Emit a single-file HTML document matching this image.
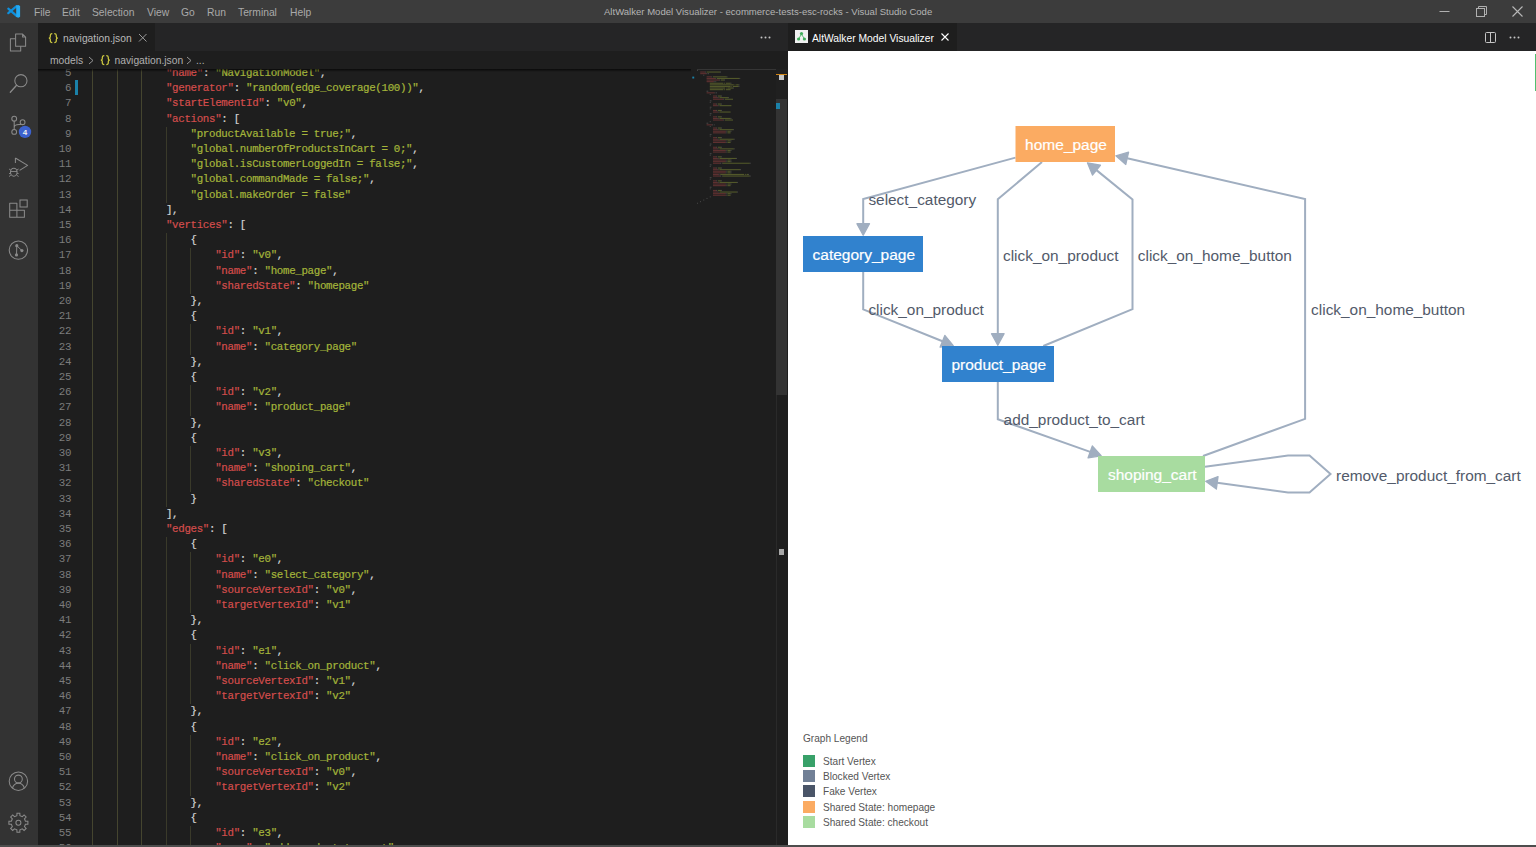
<!DOCTYPE html>
<html><head><meta charset="utf-8">
<style>
*{margin:0;padding:0;box-sizing:border-box}
html,body{width:1536px;height:847px;overflow:hidden;background:#1e1e1e;font-family:"Liberation Sans",sans-serif}
.a{position:absolute}
#title{left:0;top:0;width:1536px;height:23px;background:#3c3c3c}
.menu{position:absolute;top:5.5px;font-size:10.3px;color:#aaaaaa;line-height:13px;white-space:nowrap}
#wtitle{position:absolute;top:5.5px;left:604px;font-size:9.55px;color:#b4b4b4;line-height:12px;white-space:nowrap}
#act{left:0;top:23px;width:38px;height:822px;background:#333333}
#tabs1{left:38px;top:23px;width:750px;height:28px;background:#252526}
#tab1{left:38px;top:23px;width:117px;height:28px;background:#1e1e1e}
#tabs2{left:788px;top:23px;width:748px;height:28px;background:#252526}
#tab2{left:788px;top:23px;width:169px;height:28px;background:#1e1e1e}
.tt{position:absolute;font-size:10.3px;line-height:13px;white-space:nowrap}
#bc{left:38px;top:51px;width:750px;height:18px;background:#1e1e1e}
#edshadow{left:38px;top:69px;width:653px;height:3px;background:linear-gradient(#000000aa,#00000000)}
#webview{left:788px;top:51px;width:748px;height:794px;background:#ffffff}
#status{left:0;top:845px;width:1536px;height:2px;background:#4d4d4d}
.clip{position:absolute;left:38px;top:69px;width:659px;height:776px;overflow:hidden}
.inner{position:absolute;left:-38px;top:-69px;width:1536px;height:847px}
.ln{position:absolute;font-family:"Liberation Mono",monospace;font-size:10.8px;letter-spacing:-0.32px;-webkit-text-stroke:0.2px currentColor;line-height:15.2px;white-space:pre;height:15.2px}
.num{position:absolute;left:38px;width:33.2px;text-align:right;font-family:"Liberation Mono",monospace;font-size:10.8px;letter-spacing:-0.32px;line-height:15.2px;color:#7c7c7c;white-space:pre}
.k{color:#d44d4c}
.s{color:#a4b53a}
.p{color:#d4d4d4}
.g0{position:absolute;width:1px;background:#45452f}
.g1{position:absolute;width:1px;background:#3a3a2a}
.lbl{font-family:"Liberation Sans",sans-serif;font-size:15.4px;fill:#525a6a}
.nl{font-family:"Liberation Sans",sans-serif;font-size:15.5px;fill:#ffffff;stroke:#ffffff;stroke-width:0.2px}
.leg{position:absolute;font-size:10.1px;color:#555555;line-height:13px;white-space:nowrap}
.sw{position:absolute;left:803px;width:12px;height:12px}
</style></head><body>
<div id="title" class="a">
  <svg class="a" style="left:0;top:0" width="30" height="23">
    <path d="M8.3 8.6 L16.6 15.8 M8.3 13.2 L16.6 6.2" stroke="#0e8fdc" stroke-width="2.2" stroke-linecap="round"/>
    <path d="M16.2 5.6 L18.4 4.9 L20.1 5.9 V16.8 L18.4 17.7 L16.2 17 Z" fill="#23a9f2"/>
  </svg>
  <div class="menu" style="left:34px">File</div>
  <div class="menu" style="left:62px">Edit</div>
  <div class="menu" style="left:92px">Selection</div>
  <div class="menu" style="left:147px">View</div>
  <div class="menu" style="left:181px">Go</div>
  <div class="menu" style="left:207px">Run</div>
  <div class="menu" style="left:238px">Terminal</div>
  <div class="menu" style="left:290px">Help</div>
  <div id="wtitle">AltWalker Model Visualizer - ecommerce-tests-esc-rocks - Visual Studio Code</div>
  <svg class="a" style="left:1430px;top:0" width="106" height="23">
    <path d="M9.5 11.5 H19.5" stroke="#b0b0b0" stroke-width="1"/>
    <rect x="46.5" y="8.5" width="8" height="8" fill="none" stroke="#b0b0b0" stroke-width="1"/>
    <path d="M48.5 8.5 V6.5 H56.5 V14.5 H54.5" fill="none" stroke="#b0b0b0" stroke-width="1"/>
    <path d="M82.5 6.5 L92.5 16.5 M92.5 6.5 L82.5 16.5" stroke="#b8b8b8" stroke-width="1.1"/>
  </svg>
</div>
<div id="act" class="a">
<svg class="a" style="left:0;top:-23px" width="38" height="847"><path d="M15.6 34 H22.6 L25.6 37 V46.2 H15.6 Z M22.6 34 V37 H25.6" fill="none" stroke="#8a8a8a" stroke-width="1.05" stroke-linejoin="round"/><path d="M15.6 38.7 H10.4 V50.9 H20.7 V46.2" fill="none" stroke="#8a8a8a" stroke-width="1.05" stroke-linejoin="round"/><circle cx="20.9" cy="80.7" r="6.1" fill="none" stroke="#8a8a8a" stroke-width="1.05"/><path d="M16.6 85.2 L10.3 92.3" stroke="#8a8a8a" stroke-width="1.3" stroke-linecap="round"/><circle cx="14.2" cy="118.7" r="2.4" fill="none" stroke="#8a8a8a" stroke-width="1.05"/><circle cx="22.6" cy="122.2" r="2.4" fill="none" stroke="#8a8a8a" stroke-width="1.05"/><circle cx="14.2" cy="131.9" r="2.4" fill="none" stroke="#8a8a8a" stroke-width="1.05"/><path d="M14.2 121.1 V129.5 M14.2 127.5 Q14.2 124.5 19 124.5 H21.5" fill="none" stroke="#8a8a8a" stroke-width="1.05"/><circle cx="25" cy="131.9" r="6.2" fill="#3c62cf"/><text x="25.1" y="134.8" font-family="Liberation Sans" font-size="8" font-weight="bold" fill="#f0f0f0" text-anchor="middle">4</text><path d="M15.4 158 L27.6 165.4 L19.6 170.4 M15.4 158 V163" fill="none" stroke="#8a8a8a" stroke-width="1.05" stroke-linejoin="round"/><ellipse cx="13.8" cy="172.2" rx="3.3" ry="4" fill="none" stroke="#8a8a8a" stroke-width="1.05"/><path d="M10.5 171.5 H17.1 M9 169 L10.8 170 M18.6 169 L16.8 170 M9 173.5 H10.5 M18.6 173.5 H17.1 M9 176.5 L10.8 175.3 M18.6 176.5 L16.8 175.3" fill="none" stroke="#8a8a8a" stroke-width="0.9"/><path d="M9.7 203.3 H16.9 V217.3 H9.7 Z M9.7 210.3 H24.4 V217.3 H16.9" fill="none" stroke="#8a8a8a" stroke-width="1.05" stroke-linejoin="round"/><rect x="20" y="200" width="7.2" height="7" fill="none" stroke="#8a8a8a" stroke-width="1.05"/><circle cx="18.4" cy="250.1" r="9.2" fill="none" stroke="#8a8a8a" stroke-width="1.05"/><path d="M16.8 245.7 L21.9 250.6 M16.8 245.7 L16.5 254.9" stroke="#8a8a8a" stroke-width="1"/><circle cx="16.8" cy="245.7" r="1.6" fill="#8a8a8a"/><circle cx="21.9" cy="250.6" r="1.6" fill="#8a8a8a"/><circle cx="16.5" cy="254.9" r="1.6" fill="#8a8a8a"/><circle cx="18.4" cy="781.2" r="9.2" fill="none" stroke="#8a8a8a" stroke-width="1.05"/><circle cx="18.4" cy="779" r="3.9" fill="none" stroke="#8a8a8a" stroke-width="1.05"/><path d="M12.4 788.3 Q13.6 783.2 18.4 783.2 Q23.2 783.2 24.4 788.3" fill="none" stroke="#8a8a8a" stroke-width="1.05"/><path d="M27.89 821.27 L27.89 824.13 L25.44 824.22 L24.45 826.61 L26.12 828.40 L24.10 830.42 L22.31 828.75 L19.92 829.74 L19.83 832.19 L16.97 832.19 L16.88 829.74 L14.49 828.75 L12.70 830.42 L10.68 828.40 L12.35 826.61 L11.36 824.22 L8.91 824.13 L8.91 821.27 L11.36 821.18 L12.35 818.79 L10.68 817.00 L12.70 814.98 L14.49 816.65 L16.88 815.66 L16.97 813.21 L19.83 813.21 L19.92 815.66 L22.31 816.65 L24.10 814.98 L26.12 817.00 L24.45 818.79 L25.44 821.18 Z" fill="none" stroke="#8a8a8a" stroke-width="1.05" stroke-linejoin="miter"/><circle cx="18.4" cy="822.7" r="2.5" fill="none" stroke="#8a8a8a" stroke-width="1.05"/></svg>
</div>
<div id="tabs1" class="a"></div>
<div id="tab1" class="a"></div>
<svg class="a" style="left:48px;top:32.5px" width="11" height="11"><path d="M4.3 0.6 Q2.3 0.6 2.3 2.4 V3.8 Q2.3 5.1 0.8 5.1 Q2.3 5.1 2.3 6.4 V7.8 Q2.3 9.6 4.3 9.6 M6.3 0.6 Q8.3 0.6 8.3 2.4 V3.8 Q8.3 5.1 9.8 5.1 Q8.3 5.1 8.3 6.4 V7.8 Q8.3 9.6 6.3 9.6" fill="none" stroke="#cdc840" stroke-width="1.25"/></svg>
<div class="tt" style="left:63px;top:31.8px;color:#b9b9b9">navigation.json</div>
<svg class="a" style="left:137.5px;top:33px" width="10" height="10"><path d="M1 1 L8.5 8.5 M8.5 1 L1 8.5" stroke="#9a9a9a" stroke-width="1"/></svg>
<svg class="a" style="left:760px;top:36px" width="12" height="3"><circle cx="1.5" cy="1.5" r="1" fill="#c5c5c5"/><circle cx="5.5" cy="1.5" r="1" fill="#c5c5c5"/><circle cx="9.5" cy="1.5" r="1" fill="#c5c5c5"/></svg>
<div id="bc" class="a"></div>
<div class="tt" style="left:50px;top:54px;color:#b0b0b0">models</div>
<svg class="a" style="left:88px;top:56px" width="6" height="9"><path d="M1 1 L5 4.5 L1 8" fill="none" stroke="#a0a0a0" stroke-width="0.9"/></svg>
<svg class="a" style="left:99.5px;top:55px" width="11" height="11"><path d="M4.3 0.6 Q2.3 0.6 2.3 2.4 V3.8 Q2.3 5.1 0.8 5.1 Q2.3 5.1 2.3 6.4 V7.8 Q2.3 9.6 4.3 9.6 M6.3 0.6 Q8.3 0.6 8.3 2.4 V3.8 Q8.3 5.1 9.8 5.1 Q8.3 5.1 8.3 6.4 V7.8 Q8.3 9.6 6.3 9.6" fill="none" stroke="#cdc840" stroke-width="1.25"/></svg>
<div class="tt" style="left:114.5px;top:54px;color:#b0b0b0">navigation.json</div>
<svg class="a" style="left:186px;top:56px" width="6" height="9"><path d="M1 1 L5 4.5 L1 8" fill="none" stroke="#a0a0a0" stroke-width="0.9"/></svg>
<div class="tt" style="left:196px;top:54px;color:#b0b0b0">...</div>

<div class="clip"><div class="inner">
<div class="num" style="top:66.00px">5</div>
<div class="num" style="top:81.20px">6</div>
<div class="num" style="top:96.40px">7</div>
<div class="num" style="top:111.60px">8</div>
<div class="num" style="top:126.80px">9</div>
<div class="num" style="top:142.00px">10</div>
<div class="num" style="top:157.20px">11</div>
<div class="num" style="top:172.40px">12</div>
<div class="num" style="top:187.60px">13</div>
<div class="num" style="top:202.80px">14</div>
<div class="num" style="top:218.00px">15</div>
<div class="num" style="top:233.20px">16</div>
<div class="num" style="top:248.40px">17</div>
<div class="num" style="top:263.60px">18</div>
<div class="num" style="top:278.80px">19</div>
<div class="num" style="top:294.00px">20</div>
<div class="num" style="top:309.20px">21</div>
<div class="num" style="top:324.40px">22</div>
<div class="num" style="top:339.60px">23</div>
<div class="num" style="top:354.80px">24</div>
<div class="num" style="top:370.00px">25</div>
<div class="num" style="top:385.20px">26</div>
<div class="num" style="top:400.40px">27</div>
<div class="num" style="top:415.60px">28</div>
<div class="num" style="top:430.80px">29</div>
<div class="num" style="top:446.00px">30</div>
<div class="num" style="top:461.20px">31</div>
<div class="num" style="top:476.40px">32</div>
<div class="num" style="top:491.60px">33</div>
<div class="num" style="top:506.80px">34</div>
<div class="num" style="top:522.00px">35</div>
<div class="num" style="top:537.20px">36</div>
<div class="num" style="top:552.40px">37</div>
<div class="num" style="top:567.60px">38</div>
<div class="num" style="top:582.80px">39</div>
<div class="num" style="top:598.00px">40</div>
<div class="num" style="top:613.20px">41</div>
<div class="num" style="top:628.40px">42</div>
<div class="num" style="top:643.60px">43</div>
<div class="num" style="top:658.80px">44</div>
<div class="num" style="top:674.00px">45</div>
<div class="num" style="top:689.20px">46</div>
<div class="num" style="top:704.40px">47</div>
<div class="num" style="top:719.60px">48</div>
<div class="num" style="top:734.80px">49</div>
<div class="num" style="top:750.00px">50</div>
<div class="num" style="top:765.20px">51</div>
<div class="num" style="top:780.40px">52</div>
<div class="num" style="top:795.60px">53</div>
<div class="num" style="top:810.80px">54</div>
<div class="num" style="top:826.00px">55</div>
<div class="num" style="top:841.20px">56</div>
<div class="a" style="left:75px;top:80px;width:3px;height:15px;background:#1b81a8"></div>
<div class="g0" style="left:91.90px;top:66.00px;height:790.40px"></div>
<div class="g0" style="left:116.54px;top:66.00px;height:790.40px"></div>
<div class="g0" style="left:141.18px;top:66.00px;height:790.40px"></div>
<div class="g1" style="left:165.82px;top:126.80px;height:76.00px"></div>
<div class="g1" style="left:165.82px;top:233.20px;height:273.60px"></div>
<div class="g1" style="left:165.82px;top:537.20px;height:319.20px"></div>
<div class="g1" style="left:190.46px;top:248.40px;height:45.60px"></div>
<div class="g1" style="left:190.46px;top:324.40px;height:30.40px"></div>
<div class="g1" style="left:190.46px;top:385.20px;height:30.40px"></div>
<div class="g1" style="left:190.46px;top:446.00px;height:45.60px"></div>
<div class="g1" style="left:190.46px;top:552.40px;height:60.80px"></div>
<div class="g1" style="left:190.46px;top:643.60px;height:60.80px"></div>
<div class="g1" style="left:190.46px;top:734.80px;height:60.80px"></div>
<div class="g1" style="left:190.46px;top:826.00px;height:30.40px"></div>
<div class="ln" style="top:66.00px;left:165.92px"><span class="k">&quot;name&quot;</span><span class="p">:</span><span class="p"> </span><span class="s">&quot;NavigationModel&quot;</span><span class="p">,</span></div>
<div class="ln" style="top:81.20px;left:165.92px"><span class="k">&quot;generator&quot;</span><span class="p">:</span><span class="p"> </span><span class="s">&quot;random(edge_coverage(100))&quot;</span><span class="p">,</span></div>
<div class="ln" style="top:96.40px;left:165.92px"><span class="k">&quot;startElementId&quot;</span><span class="p">:</span><span class="p"> </span><span class="s">&quot;v0&quot;</span><span class="p">,</span></div>
<div class="ln" style="top:111.60px;left:165.92px"><span class="k">&quot;actions&quot;</span><span class="p">:</span><span class="p"> [</span></div>
<div class="ln" style="top:126.80px;left:190.56px"><span class="s">&quot;productAvailable = true;&quot;</span><span class="p">,</span></div>
<div class="ln" style="top:142.00px;left:190.56px"><span class="s">&quot;global.numberOfProductsInCart = 0;&quot;</span><span class="p">,</span></div>
<div class="ln" style="top:157.20px;left:190.56px"><span class="s">&quot;global.isCustomerLoggedIn = false;&quot;</span><span class="p">,</span></div>
<div class="ln" style="top:172.40px;left:190.56px"><span class="s">&quot;global.commandMade = false;&quot;</span><span class="p">,</span></div>
<div class="ln" style="top:187.60px;left:190.56px"><span class="s">&quot;global.makeOrder = false&quot;</span></div>
<div class="ln" style="top:202.80px;left:165.92px"><span class="p">],</span></div>
<div class="ln" style="top:218.00px;left:165.92px"><span class="k">&quot;vertices&quot;</span><span class="p">:</span><span class="p"> [</span></div>
<div class="ln" style="top:233.20px;left:190.56px"><span class="p">{</span></div>
<div class="ln" style="top:248.40px;left:215.20px"><span class="k">&quot;id&quot;</span><span class="p">:</span><span class="p"> </span><span class="s">&quot;v0&quot;</span><span class="p">,</span></div>
<div class="ln" style="top:263.60px;left:215.20px"><span class="k">&quot;name&quot;</span><span class="p">:</span><span class="p"> </span><span class="s">&quot;home_page&quot;</span><span class="p">,</span></div>
<div class="ln" style="top:278.80px;left:215.20px"><span class="k">&quot;sharedState&quot;</span><span class="p">:</span><span class="p"> </span><span class="s">&quot;homepage&quot;</span></div>
<div class="ln" style="top:294.00px;left:190.56px"><span class="p">},</span></div>
<div class="ln" style="top:309.20px;left:190.56px"><span class="p">{</span></div>
<div class="ln" style="top:324.40px;left:215.20px"><span class="k">&quot;id&quot;</span><span class="p">:</span><span class="p"> </span><span class="s">&quot;v1&quot;</span><span class="p">,</span></div>
<div class="ln" style="top:339.60px;left:215.20px"><span class="k">&quot;name&quot;</span><span class="p">:</span><span class="p"> </span><span class="s">&quot;category_page&quot;</span></div>
<div class="ln" style="top:354.80px;left:190.56px"><span class="p">},</span></div>
<div class="ln" style="top:370.00px;left:190.56px"><span class="p">{</span></div>
<div class="ln" style="top:385.20px;left:215.20px"><span class="k">&quot;id&quot;</span><span class="p">:</span><span class="p"> </span><span class="s">&quot;v2&quot;</span><span class="p">,</span></div>
<div class="ln" style="top:400.40px;left:215.20px"><span class="k">&quot;name&quot;</span><span class="p">:</span><span class="p"> </span><span class="s">&quot;product_page&quot;</span></div>
<div class="ln" style="top:415.60px;left:190.56px"><span class="p">},</span></div>
<div class="ln" style="top:430.80px;left:190.56px"><span class="p">{</span></div>
<div class="ln" style="top:446.00px;left:215.20px"><span class="k">&quot;id&quot;</span><span class="p">:</span><span class="p"> </span><span class="s">&quot;v3&quot;</span><span class="p">,</span></div>
<div class="ln" style="top:461.20px;left:215.20px"><span class="k">&quot;name&quot;</span><span class="p">:</span><span class="p"> </span><span class="s">&quot;shoping_cart&quot;</span><span class="p">,</span></div>
<div class="ln" style="top:476.40px;left:215.20px"><span class="k">&quot;sharedState&quot;</span><span class="p">:</span><span class="p"> </span><span class="s">&quot;checkout&quot;</span></div>
<div class="ln" style="top:491.60px;left:190.56px"><span class="p">}</span></div>
<div class="ln" style="top:506.80px;left:165.92px"><span class="p">],</span></div>
<div class="ln" style="top:522.00px;left:165.92px"><span class="k">&quot;edges&quot;</span><span class="p">:</span><span class="p"> [</span></div>
<div class="ln" style="top:537.20px;left:190.56px"><span class="p">{</span></div>
<div class="ln" style="top:552.40px;left:215.20px"><span class="k">&quot;id&quot;</span><span class="p">:</span><span class="p"> </span><span class="s">&quot;e0&quot;</span><span class="p">,</span></div>
<div class="ln" style="top:567.60px;left:215.20px"><span class="k">&quot;name&quot;</span><span class="p">:</span><span class="p"> </span><span class="s">&quot;select_category&quot;</span><span class="p">,</span></div>
<div class="ln" style="top:582.80px;left:215.20px"><span class="k">&quot;sourceVertexId&quot;</span><span class="p">:</span><span class="p"> </span><span class="s">&quot;v0&quot;</span><span class="p">,</span></div>
<div class="ln" style="top:598.00px;left:215.20px"><span class="k">&quot;targetVertexId&quot;</span><span class="p">:</span><span class="p"> </span><span class="s">&quot;v1&quot;</span></div>
<div class="ln" style="top:613.20px;left:190.56px"><span class="p">},</span></div>
<div class="ln" style="top:628.40px;left:190.56px"><span class="p">{</span></div>
<div class="ln" style="top:643.60px;left:215.20px"><span class="k">&quot;id&quot;</span><span class="p">:</span><span class="p"> </span><span class="s">&quot;e1&quot;</span><span class="p">,</span></div>
<div class="ln" style="top:658.80px;left:215.20px"><span class="k">&quot;name&quot;</span><span class="p">:</span><span class="p"> </span><span class="s">&quot;click_on_product&quot;</span><span class="p">,</span></div>
<div class="ln" style="top:674.00px;left:215.20px"><span class="k">&quot;sourceVertexId&quot;</span><span class="p">:</span><span class="p"> </span><span class="s">&quot;v1&quot;</span><span class="p">,</span></div>
<div class="ln" style="top:689.20px;left:215.20px"><span class="k">&quot;targetVertexId&quot;</span><span class="p">:</span><span class="p"> </span><span class="s">&quot;v2&quot;</span></div>
<div class="ln" style="top:704.40px;left:190.56px"><span class="p">},</span></div>
<div class="ln" style="top:719.60px;left:190.56px"><span class="p">{</span></div>
<div class="ln" style="top:734.80px;left:215.20px"><span class="k">&quot;id&quot;</span><span class="p">:</span><span class="p"> </span><span class="s">&quot;e2&quot;</span><span class="p">,</span></div>
<div class="ln" style="top:750.00px;left:215.20px"><span class="k">&quot;name&quot;</span><span class="p">:</span><span class="p"> </span><span class="s">&quot;click_on_product&quot;</span><span class="p">,</span></div>
<div class="ln" style="top:765.20px;left:215.20px"><span class="k">&quot;sourceVertexId&quot;</span><span class="p">:</span><span class="p"> </span><span class="s">&quot;v0&quot;</span><span class="p">,</span></div>
<div class="ln" style="top:780.40px;left:215.20px"><span class="k">&quot;targetVertexId&quot;</span><span class="p">:</span><span class="p"> </span><span class="s">&quot;v2&quot;</span></div>
<div class="ln" style="top:795.60px;left:190.56px"><span class="p">},</span></div>
<div class="ln" style="top:810.80px;left:190.56px"><span class="p">{</span></div>
<div class="ln" style="top:826.00px;left:215.20px"><span class="k">&quot;id&quot;</span><span class="p">:</span><span class="p"> </span><span class="s">&quot;e3&quot;</span><span class="p">,</span></div>
<div class="ln" style="top:841.20px;left:215.20px"><span class="k">&quot;name&quot;</span><span class="p">:</span><span class="p"> </span><span class="s">&quot;add_product_to_cart&quot;</span><span class="p">,</span></div>
</div></div>
<div id="edshadow" class="a"></div>
<svg class="a" style="left:690px;top:69px" width="86" height="776" viewBox="690 69 86 776"><rect x="697" y="69" width="79" height="1" fill="#353535"/><rect x="697.0" y="69.9" width="0.8" height="1.1" fill="#4e4e4e"/><rect x="700.2" y="71.5" width="4.8" height="1.1" fill="#5e3030"/><rect x="705.0" y="71.5" width="0.8" height="1.1" fill="#4e4e4e"/><rect x="706.6" y="71.5" width="13.6" height="1.1" fill="#52582a"/><rect x="720.2" y="71.5" width="0.8" height="1.1" fill="#4e4e4e"/><rect x="700.2" y="73.1" width="6.4" height="1.1" fill="#5e3030"/><rect x="706.6" y="73.1" width="0.8" height="1.1" fill="#4e4e4e"/><rect x="708.2" y="73.1" width="0.8" height="1.1" fill="#4e4e4e"/><rect x="703.4" y="74.7" width="0.8" height="1.1" fill="#4e4e4e"/><rect x="706.6" y="76.3" width="4.8" height="1.1" fill="#5e3030"/><rect x="711.4" y="76.3" width="0.8" height="1.1" fill="#4e4e4e"/><rect x="713.0" y="76.3" width="13.6" height="1.1" fill="#52582a"/><rect x="726.6" y="76.3" width="0.8" height="1.1" fill="#4e4e4e"/><rect x="706.6" y="77.9" width="8.8" height="1.1" fill="#5e3030"/><rect x="715.4" y="77.9" width="0.8" height="1.1" fill="#4e4e4e"/><rect x="717.0" y="77.9" width="22.4" height="1.1" fill="#52582a"/><rect x="739.4" y="77.9" width="0.8" height="1.1" fill="#4e4e4e"/><rect x="706.6" y="79.5" width="12.8" height="1.1" fill="#5e3030"/><rect x="719.4" y="79.5" width="0.8" height="1.1" fill="#4e4e4e"/><rect x="721.0" y="79.5" width="3.2" height="1.1" fill="#52582a"/><rect x="724.2" y="79.5" width="0.8" height="1.1" fill="#4e4e4e"/><rect x="706.6" y="81.1" width="7.2" height="1.1" fill="#5e3030"/><rect x="713.8" y="81.1" width="0.8" height="1.1" fill="#4e4e4e"/><rect x="715.4" y="81.1" width="0.8" height="1.1" fill="#4e4e4e"/><rect x="709.8" y="82.7" width="13.6" height="1.1" fill="#52582a"/><rect x="724.2" y="82.7" width="0.8" height="1.1" fill="#52582a"/><rect x="725.8" y="82.7" width="4.8" height="1.1" fill="#52582a"/><rect x="730.6" y="82.7" width="0.8" height="1.1" fill="#4e4e4e"/><rect x="709.8" y="84.3" width="24.0" height="1.1" fill="#52582a"/><rect x="734.6" y="84.3" width="0.8" height="1.1" fill="#52582a"/><rect x="736.2" y="84.3" width="2.4" height="1.1" fill="#52582a"/><rect x="738.6" y="84.3" width="0.8" height="1.1" fill="#4e4e4e"/><rect x="709.8" y="85.9" width="20.8" height="1.1" fill="#52582a"/><rect x="731.4" y="85.9" width="0.8" height="1.1" fill="#52582a"/><rect x="733.0" y="85.9" width="5.6" height="1.1" fill="#52582a"/><rect x="738.6" y="85.9" width="0.8" height="1.1" fill="#4e4e4e"/><rect x="709.8" y="87.5" width="15.2" height="1.1" fill="#52582a"/><rect x="725.8" y="87.5" width="0.8" height="1.1" fill="#52582a"/><rect x="727.4" y="87.5" width="5.6" height="1.1" fill="#52582a"/><rect x="733.0" y="87.5" width="0.8" height="1.1" fill="#4e4e4e"/><rect x="709.8" y="89.1" width="13.6" height="1.1" fill="#52582a"/><rect x="724.2" y="89.1" width="0.8" height="1.1" fill="#52582a"/><rect x="725.8" y="89.1" width="4.8" height="1.1" fill="#52582a"/><rect x="706.6" y="90.7" width="0.8" height="1.1" fill="#4e4e4e"/><rect x="707.4" y="90.7" width="0.8" height="1.1" fill="#4e4e4e"/><rect x="706.6" y="92.3" width="8.0" height="1.1" fill="#5e3030"/><rect x="714.6" y="92.3" width="0.8" height="1.1" fill="#4e4e4e"/><rect x="716.2" y="92.3" width="0.8" height="1.1" fill="#4e4e4e"/><rect x="709.8" y="93.9" width="0.8" height="1.1" fill="#4e4e4e"/><rect x="713.0" y="95.5" width="3.2" height="1.1" fill="#5e3030"/><rect x="716.2" y="95.5" width="0.8" height="1.1" fill="#4e4e4e"/><rect x="717.8" y="95.5" width="3.2" height="1.1" fill="#52582a"/><rect x="721.0" y="95.5" width="0.8" height="1.1" fill="#4e4e4e"/><rect x="713.0" y="97.1" width="4.8" height="1.1" fill="#5e3030"/><rect x="717.8" y="97.1" width="0.8" height="1.1" fill="#4e4e4e"/><rect x="719.4" y="97.1" width="8.8" height="1.1" fill="#52582a"/><rect x="728.2" y="97.1" width="0.8" height="1.1" fill="#4e4e4e"/><rect x="713.0" y="98.7" width="10.4" height="1.1" fill="#5e3030"/><rect x="723.4" y="98.7" width="0.8" height="1.1" fill="#4e4e4e"/><rect x="725.0" y="98.7" width="8.0" height="1.1" fill="#52582a"/><rect x="709.8" y="100.3" width="0.8" height="1.1" fill="#4e4e4e"/><rect x="710.6" y="100.3" width="0.8" height="1.1" fill="#4e4e4e"/><rect x="709.8" y="101.9" width="0.8" height="1.1" fill="#4e4e4e"/><rect x="713.0" y="103.5" width="3.2" height="1.1" fill="#5e3030"/><rect x="716.2" y="103.5" width="0.8" height="1.1" fill="#4e4e4e"/><rect x="717.8" y="103.5" width="3.2" height="1.1" fill="#52582a"/><rect x="721.0" y="103.5" width="0.8" height="1.1" fill="#4e4e4e"/><rect x="713.0" y="105.1" width="4.8" height="1.1" fill="#5e3030"/><rect x="717.8" y="105.1" width="0.8" height="1.1" fill="#4e4e4e"/><rect x="719.4" y="105.1" width="12.0" height="1.1" fill="#52582a"/><rect x="709.8" y="106.7" width="0.8" height="1.1" fill="#4e4e4e"/><rect x="710.6" y="106.7" width="0.8" height="1.1" fill="#4e4e4e"/><rect x="709.8" y="108.3" width="0.8" height="1.1" fill="#4e4e4e"/><rect x="713.0" y="109.9" width="3.2" height="1.1" fill="#5e3030"/><rect x="716.2" y="109.9" width="0.8" height="1.1" fill="#4e4e4e"/><rect x="717.8" y="109.9" width="3.2" height="1.1" fill="#52582a"/><rect x="721.0" y="109.9" width="0.8" height="1.1" fill="#4e4e4e"/><rect x="713.0" y="111.5" width="4.8" height="1.1" fill="#5e3030"/><rect x="717.8" y="111.5" width="0.8" height="1.1" fill="#4e4e4e"/><rect x="719.4" y="111.5" width="11.2" height="1.1" fill="#52582a"/><rect x="709.8" y="113.1" width="0.8" height="1.1" fill="#4e4e4e"/><rect x="710.6" y="113.1" width="0.8" height="1.1" fill="#4e4e4e"/><rect x="709.8" y="114.7" width="0.8" height="1.1" fill="#4e4e4e"/><rect x="713.0" y="116.3" width="3.2" height="1.1" fill="#5e3030"/><rect x="716.2" y="116.3" width="0.8" height="1.1" fill="#4e4e4e"/><rect x="717.8" y="116.3" width="3.2" height="1.1" fill="#52582a"/><rect x="721.0" y="116.3" width="0.8" height="1.1" fill="#4e4e4e"/><rect x="713.0" y="117.9" width="4.8" height="1.1" fill="#5e3030"/><rect x="717.8" y="117.9" width="0.8" height="1.1" fill="#4e4e4e"/><rect x="719.4" y="117.9" width="11.2" height="1.1" fill="#52582a"/><rect x="730.6" y="117.9" width="0.8" height="1.1" fill="#4e4e4e"/><rect x="713.0" y="119.5" width="10.4" height="1.1" fill="#5e3030"/><rect x="723.4" y="119.5" width="0.8" height="1.1" fill="#4e4e4e"/><rect x="725.0" y="119.5" width="8.0" height="1.1" fill="#52582a"/><rect x="709.8" y="121.1" width="0.8" height="1.1" fill="#4e4e4e"/><rect x="706.6" y="122.7" width="0.8" height="1.1" fill="#4e4e4e"/><rect x="707.4" y="122.7" width="0.8" height="1.1" fill="#4e4e4e"/><rect x="706.6" y="124.3" width="5.6" height="1.1" fill="#5e3030"/><rect x="712.2" y="124.3" width="0.8" height="1.1" fill="#4e4e4e"/><rect x="713.8" y="124.3" width="0.8" height="1.1" fill="#4e4e4e"/><rect x="709.8" y="125.9" width="0.8" height="1.1" fill="#4e4e4e"/><rect x="713.0" y="127.5" width="3.2" height="1.1" fill="#5e3030"/><rect x="716.2" y="127.5" width="0.8" height="1.1" fill="#4e4e4e"/><rect x="717.8" y="127.5" width="3.2" height="1.1" fill="#52582a"/><rect x="721.0" y="127.5" width="0.8" height="1.1" fill="#4e4e4e"/><rect x="713.0" y="129.1" width="4.8" height="1.1" fill="#5e3030"/><rect x="717.8" y="129.1" width="0.8" height="1.1" fill="#4e4e4e"/><rect x="719.4" y="129.1" width="13.6" height="1.1" fill="#52582a"/><rect x="733.0" y="129.1" width="0.8" height="1.1" fill="#4e4e4e"/><rect x="713.0" y="130.7" width="12.8" height="1.1" fill="#5e3030"/><rect x="725.8" y="130.7" width="0.8" height="1.1" fill="#4e4e4e"/><rect x="727.4" y="130.7" width="3.2" height="1.1" fill="#52582a"/><rect x="730.6" y="130.7" width="0.8" height="1.1" fill="#4e4e4e"/><rect x="713.0" y="132.3" width="12.8" height="1.1" fill="#5e3030"/><rect x="725.8" y="132.3" width="0.8" height="1.1" fill="#4e4e4e"/><rect x="727.4" y="132.3" width="3.2" height="1.1" fill="#52582a"/><rect x="709.8" y="133.9" width="0.8" height="1.1" fill="#4e4e4e"/><rect x="710.6" y="133.9" width="0.8" height="1.1" fill="#4e4e4e"/><rect x="709.8" y="135.5" width="0.8" height="1.1" fill="#4e4e4e"/><rect x="713.0" y="137.1" width="3.2" height="1.1" fill="#5e3030"/><rect x="716.2" y="137.1" width="0.8" height="1.1" fill="#4e4e4e"/><rect x="717.8" y="137.1" width="3.2" height="1.1" fill="#52582a"/><rect x="721.0" y="137.1" width="0.8" height="1.1" fill="#4e4e4e"/><rect x="713.0" y="138.7" width="4.8" height="1.1" fill="#5e3030"/><rect x="717.8" y="138.7" width="0.8" height="1.1" fill="#4e4e4e"/><rect x="719.4" y="138.7" width="14.4" height="1.1" fill="#52582a"/><rect x="733.8" y="138.7" width="0.8" height="1.1" fill="#4e4e4e"/><rect x="713.0" y="140.3" width="12.8" height="1.1" fill="#5e3030"/><rect x="725.8" y="140.3" width="0.8" height="1.1" fill="#4e4e4e"/><rect x="727.4" y="140.3" width="3.2" height="1.1" fill="#52582a"/><rect x="730.6" y="140.3" width="0.8" height="1.1" fill="#4e4e4e"/><rect x="713.0" y="141.9" width="12.8" height="1.1" fill="#5e3030"/><rect x="725.8" y="141.9" width="0.8" height="1.1" fill="#4e4e4e"/><rect x="727.4" y="141.9" width="3.2" height="1.1" fill="#52582a"/><rect x="709.8" y="143.5" width="0.8" height="1.1" fill="#4e4e4e"/><rect x="710.6" y="143.5" width="0.8" height="1.1" fill="#4e4e4e"/><rect x="709.8" y="145.1" width="0.8" height="1.1" fill="#4e4e4e"/><rect x="713.0" y="146.7" width="3.2" height="1.1" fill="#5e3030"/><rect x="716.2" y="146.7" width="0.8" height="1.1" fill="#4e4e4e"/><rect x="717.8" y="146.7" width="3.2" height="1.1" fill="#52582a"/><rect x="721.0" y="146.7" width="0.8" height="1.1" fill="#4e4e4e"/><rect x="713.0" y="148.3" width="4.8" height="1.1" fill="#5e3030"/><rect x="717.8" y="148.3" width="0.8" height="1.1" fill="#4e4e4e"/><rect x="719.4" y="148.3" width="14.4" height="1.1" fill="#52582a"/><rect x="733.8" y="148.3" width="0.8" height="1.1" fill="#4e4e4e"/><rect x="713.0" y="149.9" width="12.8" height="1.1" fill="#5e3030"/><rect x="725.8" y="149.9" width="0.8" height="1.1" fill="#4e4e4e"/><rect x="727.4" y="149.9" width="3.2" height="1.1" fill="#52582a"/><rect x="730.6" y="149.9" width="0.8" height="1.1" fill="#4e4e4e"/><rect x="713.0" y="151.5" width="12.8" height="1.1" fill="#5e3030"/><rect x="725.8" y="151.5" width="0.8" height="1.1" fill="#4e4e4e"/><rect x="727.4" y="151.5" width="3.2" height="1.1" fill="#52582a"/><rect x="709.8" y="153.1" width="0.8" height="1.1" fill="#4e4e4e"/><rect x="710.6" y="153.1" width="0.8" height="1.1" fill="#4e4e4e"/><rect x="709.8" y="154.7" width="0.8" height="1.1" fill="#4e4e4e"/><rect x="713.0" y="156.3" width="3.2" height="1.1" fill="#5e3030"/><rect x="716.2" y="156.3" width="0.8" height="1.1" fill="#4e4e4e"/><rect x="717.8" y="156.3" width="3.2" height="1.1" fill="#52582a"/><rect x="721.0" y="156.3" width="0.8" height="1.1" fill="#4e4e4e"/><rect x="713.0" y="157.9" width="4.8" height="1.1" fill="#5e3030"/><rect x="717.8" y="157.9" width="0.8" height="1.1" fill="#4e4e4e"/><rect x="719.4" y="157.9" width="16.8" height="1.1" fill="#52582a"/><rect x="736.2" y="157.9" width="0.8" height="1.1" fill="#4e4e4e"/><rect x="713.0" y="159.5" width="12.8" height="1.1" fill="#5e3030"/><rect x="725.8" y="159.5" width="0.8" height="1.1" fill="#4e4e4e"/><rect x="727.4" y="159.5" width="3.2" height="1.1" fill="#52582a"/><rect x="730.6" y="159.5" width="0.8" height="1.1" fill="#4e4e4e"/><rect x="713.0" y="161.1" width="12.8" height="1.1" fill="#5e3030"/><rect x="725.8" y="161.1" width="0.8" height="1.1" fill="#4e4e4e"/><rect x="727.4" y="161.1" width="3.2" height="1.1" fill="#52582a"/><rect x="730.6" y="161.1" width="0.8" height="1.1" fill="#4e4e4e"/><rect x="713.0" y="162.7" width="7.2" height="1.1" fill="#5e3030"/><rect x="720.2" y="162.7" width="0.8" height="1.1" fill="#4e4e4e"/><rect x="721.8" y="162.7" width="0.8" height="1.1" fill="#4e4e4e"/><rect x="722.6" y="162.7" width="27.2" height="1.1" fill="#52582a"/><rect x="749.8" y="162.7" width="0.8" height="1.1" fill="#4e4e4e"/><rect x="709.8" y="164.3" width="0.8" height="1.1" fill="#4e4e4e"/><rect x="710.6" y="164.3" width="0.8" height="1.1" fill="#4e4e4e"/><rect x="709.8" y="165.9" width="0.8" height="1.1" fill="#4e4e4e"/><rect x="713.0" y="167.5" width="3.2" height="1.1" fill="#5e3030"/><rect x="716.2" y="167.5" width="0.8" height="1.1" fill="#4e4e4e"/><rect x="717.8" y="167.5" width="3.2" height="1.1" fill="#52582a"/><rect x="721.0" y="167.5" width="0.8" height="1.1" fill="#4e4e4e"/><rect x="713.0" y="169.1" width="4.8" height="1.1" fill="#5e3030"/><rect x="717.8" y="169.1" width="0.8" height="1.1" fill="#4e4e4e"/><rect x="719.4" y="169.1" width="20.8" height="1.1" fill="#52582a"/><rect x="740.2" y="169.1" width="0.8" height="1.1" fill="#4e4e4e"/><rect x="713.0" y="170.7" width="12.8" height="1.1" fill="#5e3030"/><rect x="725.8" y="170.7" width="0.8" height="1.1" fill="#4e4e4e"/><rect x="727.4" y="170.7" width="3.2" height="1.1" fill="#52582a"/><rect x="730.6" y="170.7" width="0.8" height="1.1" fill="#4e4e4e"/><rect x="713.0" y="172.3" width="12.8" height="1.1" fill="#5e3030"/><rect x="725.8" y="172.3" width="0.8" height="1.1" fill="#4e4e4e"/><rect x="727.4" y="172.3" width="3.2" height="1.1" fill="#52582a"/><rect x="730.6" y="172.3" width="0.8" height="1.1" fill="#4e4e4e"/><rect x="713.0" y="173.9" width="5.6" height="1.1" fill="#5e3030"/><rect x="718.6" y="173.9" width="0.8" height="1.1" fill="#4e4e4e"/><rect x="720.2" y="173.9" width="24.0" height="1.1" fill="#52582a"/><rect x="745.0" y="173.9" width="0.8" height="1.1" fill="#52582a"/><rect x="746.6" y="173.9" width="1.6" height="1.1" fill="#52582a"/><rect x="748.2" y="173.9" width="0.8" height="1.1" fill="#4e4e4e"/><rect x="713.0" y="175.5" width="7.2" height="1.1" fill="#5e3030"/><rect x="720.2" y="175.5" width="0.8" height="1.1" fill="#4e4e4e"/><rect x="721.8" y="175.5" width="0.8" height="1.1" fill="#4e4e4e"/><rect x="722.6" y="175.5" width="27.2" height="1.1" fill="#52582a"/><rect x="749.8" y="175.5" width="0.8" height="1.1" fill="#4e4e4e"/><rect x="709.8" y="177.1" width="0.8" height="1.1" fill="#4e4e4e"/><rect x="710.6" y="177.1" width="0.8" height="1.1" fill="#4e4e4e"/><rect x="709.8" y="178.7" width="0.8" height="1.1" fill="#4e4e4e"/><rect x="713.0" y="180.3" width="3.2" height="1.1" fill="#5e3030"/><rect x="716.2" y="180.3" width="0.8" height="1.1" fill="#4e4e4e"/><rect x="717.8" y="180.3" width="3.2" height="1.1" fill="#52582a"/><rect x="721.0" y="180.3" width="0.8" height="1.1" fill="#4e4e4e"/><rect x="713.0" y="181.9" width="4.8" height="1.1" fill="#5e3030"/><rect x="717.8" y="181.9" width="0.8" height="1.1" fill="#4e4e4e"/><rect x="719.4" y="181.9" width="17.6" height="1.1" fill="#52582a"/><rect x="737.0" y="181.9" width="0.8" height="1.1" fill="#4e4e4e"/><rect x="713.0" y="183.5" width="12.8" height="1.1" fill="#5e3030"/><rect x="725.8" y="183.5" width="0.8" height="1.1" fill="#4e4e4e"/><rect x="727.4" y="183.5" width="3.2" height="1.1" fill="#52582a"/><rect x="730.6" y="183.5" width="0.8" height="1.1" fill="#4e4e4e"/><rect x="713.0" y="185.1" width="12.8" height="1.1" fill="#5e3030"/><rect x="725.8" y="185.1" width="0.8" height="1.1" fill="#4e4e4e"/><rect x="727.4" y="185.1" width="3.2" height="1.1" fill="#52582a"/><rect x="709.8" y="186.7" width="0.8" height="1.1" fill="#4e4e4e"/><rect x="710.6" y="186.7" width="0.8" height="1.1" fill="#4e4e4e"/><rect x="709.8" y="188.3" width="0.8" height="1.1" fill="#4e4e4e"/><rect x="713.0" y="189.9" width="3.2" height="1.1" fill="#5e3030"/><rect x="716.2" y="189.9" width="0.8" height="1.1" fill="#4e4e4e"/><rect x="717.8" y="189.9" width="3.2" height="1.1" fill="#52582a"/><rect x="721.0" y="189.9" width="0.8" height="1.1" fill="#4e4e4e"/><rect x="713.0" y="191.5" width="4.8" height="1.1" fill="#5e3030"/><rect x="717.8" y="191.5" width="0.8" height="1.1" fill="#4e4e4e"/><rect x="719.4" y="191.5" width="17.6" height="1.1" fill="#52582a"/><rect x="737.0" y="191.5" width="0.8" height="1.1" fill="#4e4e4e"/><rect x="713.0" y="193.1" width="12.8" height="1.1" fill="#5e3030"/><rect x="725.8" y="193.1" width="0.8" height="1.1" fill="#4e4e4e"/><rect x="727.4" y="193.1" width="3.2" height="1.1" fill="#52582a"/><rect x="730.6" y="193.1" width="0.8" height="1.1" fill="#4e4e4e"/><rect x="713.0" y="194.7" width="12.8" height="1.1" fill="#5e3030"/><rect x="725.8" y="194.7" width="0.8" height="1.1" fill="#4e4e4e"/><rect x="727.4" y="194.7" width="3.2" height="1.1" fill="#52582a"/><rect x="709.8" y="196.3" width="0.8" height="1.1" fill="#4e4e4e"/><rect x="706.6" y="197.9" width="0.8" height="1.1" fill="#4e4e4e"/><rect x="703.4" y="199.5" width="0.8" height="1.1" fill="#4e4e4e"/><rect x="700.2" y="201.1" width="0.8" height="1.1" fill="#4e4e4e"/><rect x="697.0" y="202.7" width="0.8" height="1.1" fill="#4e4e4e"/><rect x="692.3" y="76.6" width="1.9" height="1.9" fill="#1b81a8"/></svg>
<div class="a" style="left:776px;top:69px;width:11px;height:776px;background:#1e1e1e;border-left:1px solid #2a2a2a"></div>
<div class="a" style="left:776px;top:69px;width:11px;height:30px;background:#202020"></div>
<div class="a" style="left:776px;top:99px;width:11px;height:296px;background:#333333"></div>
<div class="a" style="left:776px;top:73.5px;width:11px;height:1.5px;background:#d18616"></div>
<div class="a" style="left:779px;top:75px;width:5px;height:5px;background:#c6c6c6"></div>
<div class="a" style="left:776px;top:103px;width:4px;height:6px;background:#1b81a8"></div>
<div class="a" style="left:779.3px;top:548.6px;width:4.5px;height:6.4px;background:#a8a8a8"></div>

<div id="tabs2" class="a"></div>
<div id="tab2" class="a"></div>
<svg class="a" style="left:795px;top:30px" width="13" height="13"><rect width="13" height="13" fill="#f0f0f0"/><circle cx="6.5" cy="3.6" r="1.6" fill="#3fae5a"/><circle cx="3.6" cy="9" r="1.6" fill="#3fae5a"/><circle cx="9.4" cy="9" r="1.6" fill="#3fae5a"/><path d="M6.5 4 L3.6 9 M6.5 4 L9.4 9" stroke="#3fae5a" stroke-width="0.8"/></svg>
<div class="tt" style="left:812px;top:31.6px;color:#ffffff">AltWalker Model Visualizer</div>
<svg class="a" style="left:940px;top:32px" width="10" height="10"><path d="M1.5 1.5 L8.5 8.5 M8.5 1.5 L1.5 8.5" stroke="#ffffff" stroke-width="1.1"/></svg>
<svg class="a" style="left:1484px;top:31px" width="13" height="13"><rect x="1.5" y="1.5" width="10" height="10" rx="1" fill="none" stroke="#c5c5c5" stroke-width="1"/><path d="M6.5 1.5 V11.5" stroke="#c5c5c5" stroke-width="1"/></svg>
<svg class="a" style="left:1509px;top:36px" width="12" height="3"><circle cx="1.5" cy="1.5" r="1" fill="#c5c5c5"/><circle cx="5.5" cy="1.5" r="1" fill="#c5c5c5"/><circle cx="9.5" cy="1.5" r="1" fill="#c5c5c5"/></svg>
<div id="webview" class="a"></div>
<div class="a" style="left:1535px;top:53.5px;width:1px;height:37.5px;background:#4fc16f"></div>
<svg class="a" style="left:788px;top:51px" width="748" height="794" viewBox="788 51 748 794"><path d="M1015.50 157.60 L863.20 199.00 L863.20 223.70" fill="none" stroke="#a0aec0" stroke-width="2" stroke-linejoin="miter"/><path d="M863.20 235.30 L856.90 223.70 L869.50 223.70 Z" fill="#a0aec0" stroke="#a0aec0" stroke-width="1.3" stroke-linejoin="round"/><path d="M863.20 272.00 L863.20 309.40 L942.48 341.22" fill="none" stroke="#a0aec0" stroke-width="2" stroke-linejoin="miter"/><path d="M953.25 345.54 L940.14 347.07 L944.83 335.37 Z" fill="#a0aec0" stroke="#a0aec0" stroke-width="1.3" stroke-linejoin="round"/><path d="M1042.00 162.00 L997.80 199.20 L997.80 333.70" fill="none" stroke="#a0aec0" stroke-width="2" stroke-linejoin="miter"/><path d="M997.80 345.30 L991.50 333.70 L1004.10 333.70 Z" fill="#a0aec0" stroke="#a0aec0" stroke-width="1.3" stroke-linejoin="round"/><path d="M1043.30 346.00 L1132.50 309.10 L1132.50 199.40 L1096.45 170.15" fill="none" stroke="#a0aec0" stroke-width="2" stroke-linejoin="miter"/><path d="M1087.44 162.84 L1100.42 165.26 L1092.48 175.04 Z" fill="#a0aec0" stroke="#a0aec0" stroke-width="1.3" stroke-linejoin="round"/><path d="M997.80 382.00 L997.80 419.20 L1090.20 451.90" fill="none" stroke="#a0aec0" stroke-width="2" stroke-linejoin="miter"/><path d="M1101.14 455.77 L1088.10 457.84 L1092.31 445.96 Z" fill="#a0aec0" stroke="#a0aec0" stroke-width="1.3" stroke-linejoin="round"/><path d="M1203.00 456.00 L1305.10 418.90 L1305.10 199.00 L1127.19 158.34" fill="none" stroke="#a0aec0" stroke-width="2" stroke-linejoin="miter"/><path d="M1115.88 155.76 L1128.59 152.20 L1125.79 164.48 Z" fill="#a0aec0" stroke="#a0aec0" stroke-width="1.3" stroke-linejoin="round"/><path d="M1205.00 466.70 L1288.00 455.50 L1309.50 455.50 L1330.50 474.10 L1309.50 492.40 L1288.00 492.40 L1217.19 482.84" fill="none" stroke="#a0aec0" stroke-width="2" stroke-linejoin="miter"/><path d="M1205.69 481.29 L1218.03 476.60 L1216.35 489.09 Z" fill="#a0aec0" stroke="#a0aec0" stroke-width="1.3" stroke-linejoin="round"/><rect x="1015.5" y="126" width="99.5" height="36" fill="#fbab62"/><text class="nl" x="1066.05" y="150.1" text-anchor="middle">home_page</text><rect x="803" y="236" width="120" height="36" fill="#3182ce"/><text class="nl" x="863.8" y="260.1" text-anchor="middle">category_page</text><rect x="942" y="346" width="112" height="36" fill="#3182ce"/><text class="nl" x="998.8" y="370.1" text-anchor="middle">product_page</text><rect x="1098" y="456" width="107" height="36" fill="#a8dca0"/><text class="nl" x="1152.3" y="480.1" text-anchor="middle">shoping_cart</text><text class="lbl" x="868.4" y="205.4">select_category</text><text class="lbl" x="868.4" y="315.2">click_on_product</text><text class="lbl" x="1003" y="260.7">click_on_product</text><text class="lbl" x="1137.8" y="260.7">click_on_home_button</text><text class="lbl" x="1311.1" y="314.6">click_on_home_button</text><text class="lbl" x="1003.6" y="425.40000000000003">add_product_to_cart</text><text class="lbl" x="1336" y="480.5">remove_product_from_cart</text></svg>
<div class="leg" style="left:803px;top:731.5px">Graph Legend</div>
<div class="sw" style="top:755.0px;background:#38a169"></div>
<div class="leg" style="left:823px;top:755.0px">Start Vertex</div>
<div class="sw" style="top:770.2px;background:#718096"></div>
<div class="leg" style="left:823px;top:770.2px">Blocked Vertex</div>
<div class="sw" style="top:785.4px;background:#4a5568"></div>
<div class="leg" style="left:823px;top:785.4px">Fake Vertex</div>
<div class="sw" style="top:800.6px;background:#fbab62"></div>
<div class="leg" style="left:823px;top:800.6px">Shared State: homepage</div>
<div class="sw" style="top:815.8px;background:#a8dca0"></div>
<div class="leg" style="left:823px;top:815.8px">Shared State: checkout</div>
<div id="status" class="a"></div>
</body></html>
